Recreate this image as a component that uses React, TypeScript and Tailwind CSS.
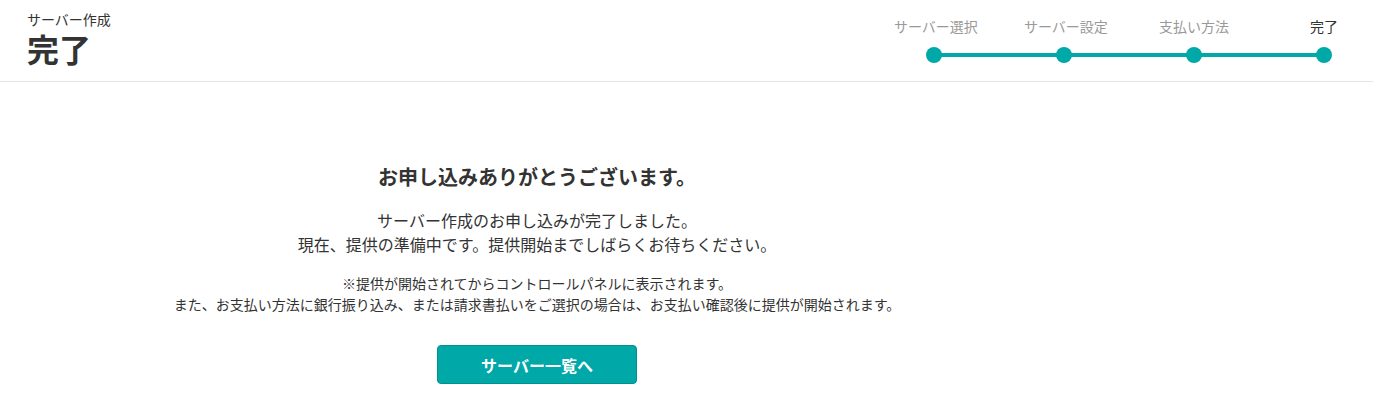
import React from "react";

interface Step {
  label: string;
  current: boolean;
}

const steps: Step[] = [
  { label: "サーバー選択", current: false },
  { label: "サーバー設定", current: false },
  { label: "支払い方法", current: false },
  { label: "完了", current: true },
];

const font = {
  fontFamily: '"Noto Sans CJK JP", "Noto Sans", sans-serif',
};

function StepBar() {
  return (
    <div className="mr-[9px] mt-[16px] w-[470px]">
      <div className="flex gap-[50px]">
        {steps.map((step) => (
          <div
            key={step.label}
            className={`w-[80px] whitespace-nowrap text-center text-[14px] leading-[20px] ${
              step.current ? "text-[#333333]" : "text-[#999999]"
            }`}
          >
            {step.label}
          </div>
        ))}
      </div>
      {/* ドットと線 */}
      <div className="relative mt-[11px] px-[32px]">
        <div className="absolute left-[40px] right-[40px] top-[6px] h-[4px] bg-[#00a8a8]" />
        <div className="relative flex justify-between">
          {steps.map((step) => (
            <span
              key={step.label}
              className="block h-[16px] w-[16px] rounded-full bg-[#00a8a8]"
            />
          ))}
        </div>
      </div>
    </div>
  );
}

export default function App() {
  return (
    <div className="min-h-screen bg-white text-[#333333]" style={font}>
      <header className="flex h-[82px] items-start justify-between border-b border-[#e5e5e5] pl-[27px]">
        <div className="pt-[9px]">
          <p className="text-[14px] leading-[20px]">サーバー作成</p>
          <h1 className="text-[32px] font-bold leading-[38px]">完了</h1>
        </div>
        <StepBar />
      </header>

      <main className="w-[1074px] pt-[81px] text-center">
        <h2 className="text-[20px] font-bold leading-[28px]">
          お申し込みありがとうございます。
        </h2>
        <div className="mt-[17px] text-[16px] leading-[24px]">
          <p>サーバー作成のお申し込みが完了しました。</p>
          <p>現在、提供の準備中です。提供開始までしばらくお待ちください。</p>
        </div>
        <div className="mt-[17px] text-[14px] leading-[21px]">
          <p>※提供が開始されてからコントロールパネルに表示されます。</p>
          <p>
            また、お支払い方法に銀行振り込み、または請求書払いをご選択の場合は、お支払い確認後に提供が開始されます。
          </p>
        </div>
        <div className="mt-[30px] flex justify-center">
          <button className="h-[39px] w-[200px] rounded-[4px] border border-[#00918f] bg-[#00a8a8] text-[16px] font-bold text-white">
            サーバー一覧へ
          </button>
        </div>
      </main>
    </div>
  );
}
